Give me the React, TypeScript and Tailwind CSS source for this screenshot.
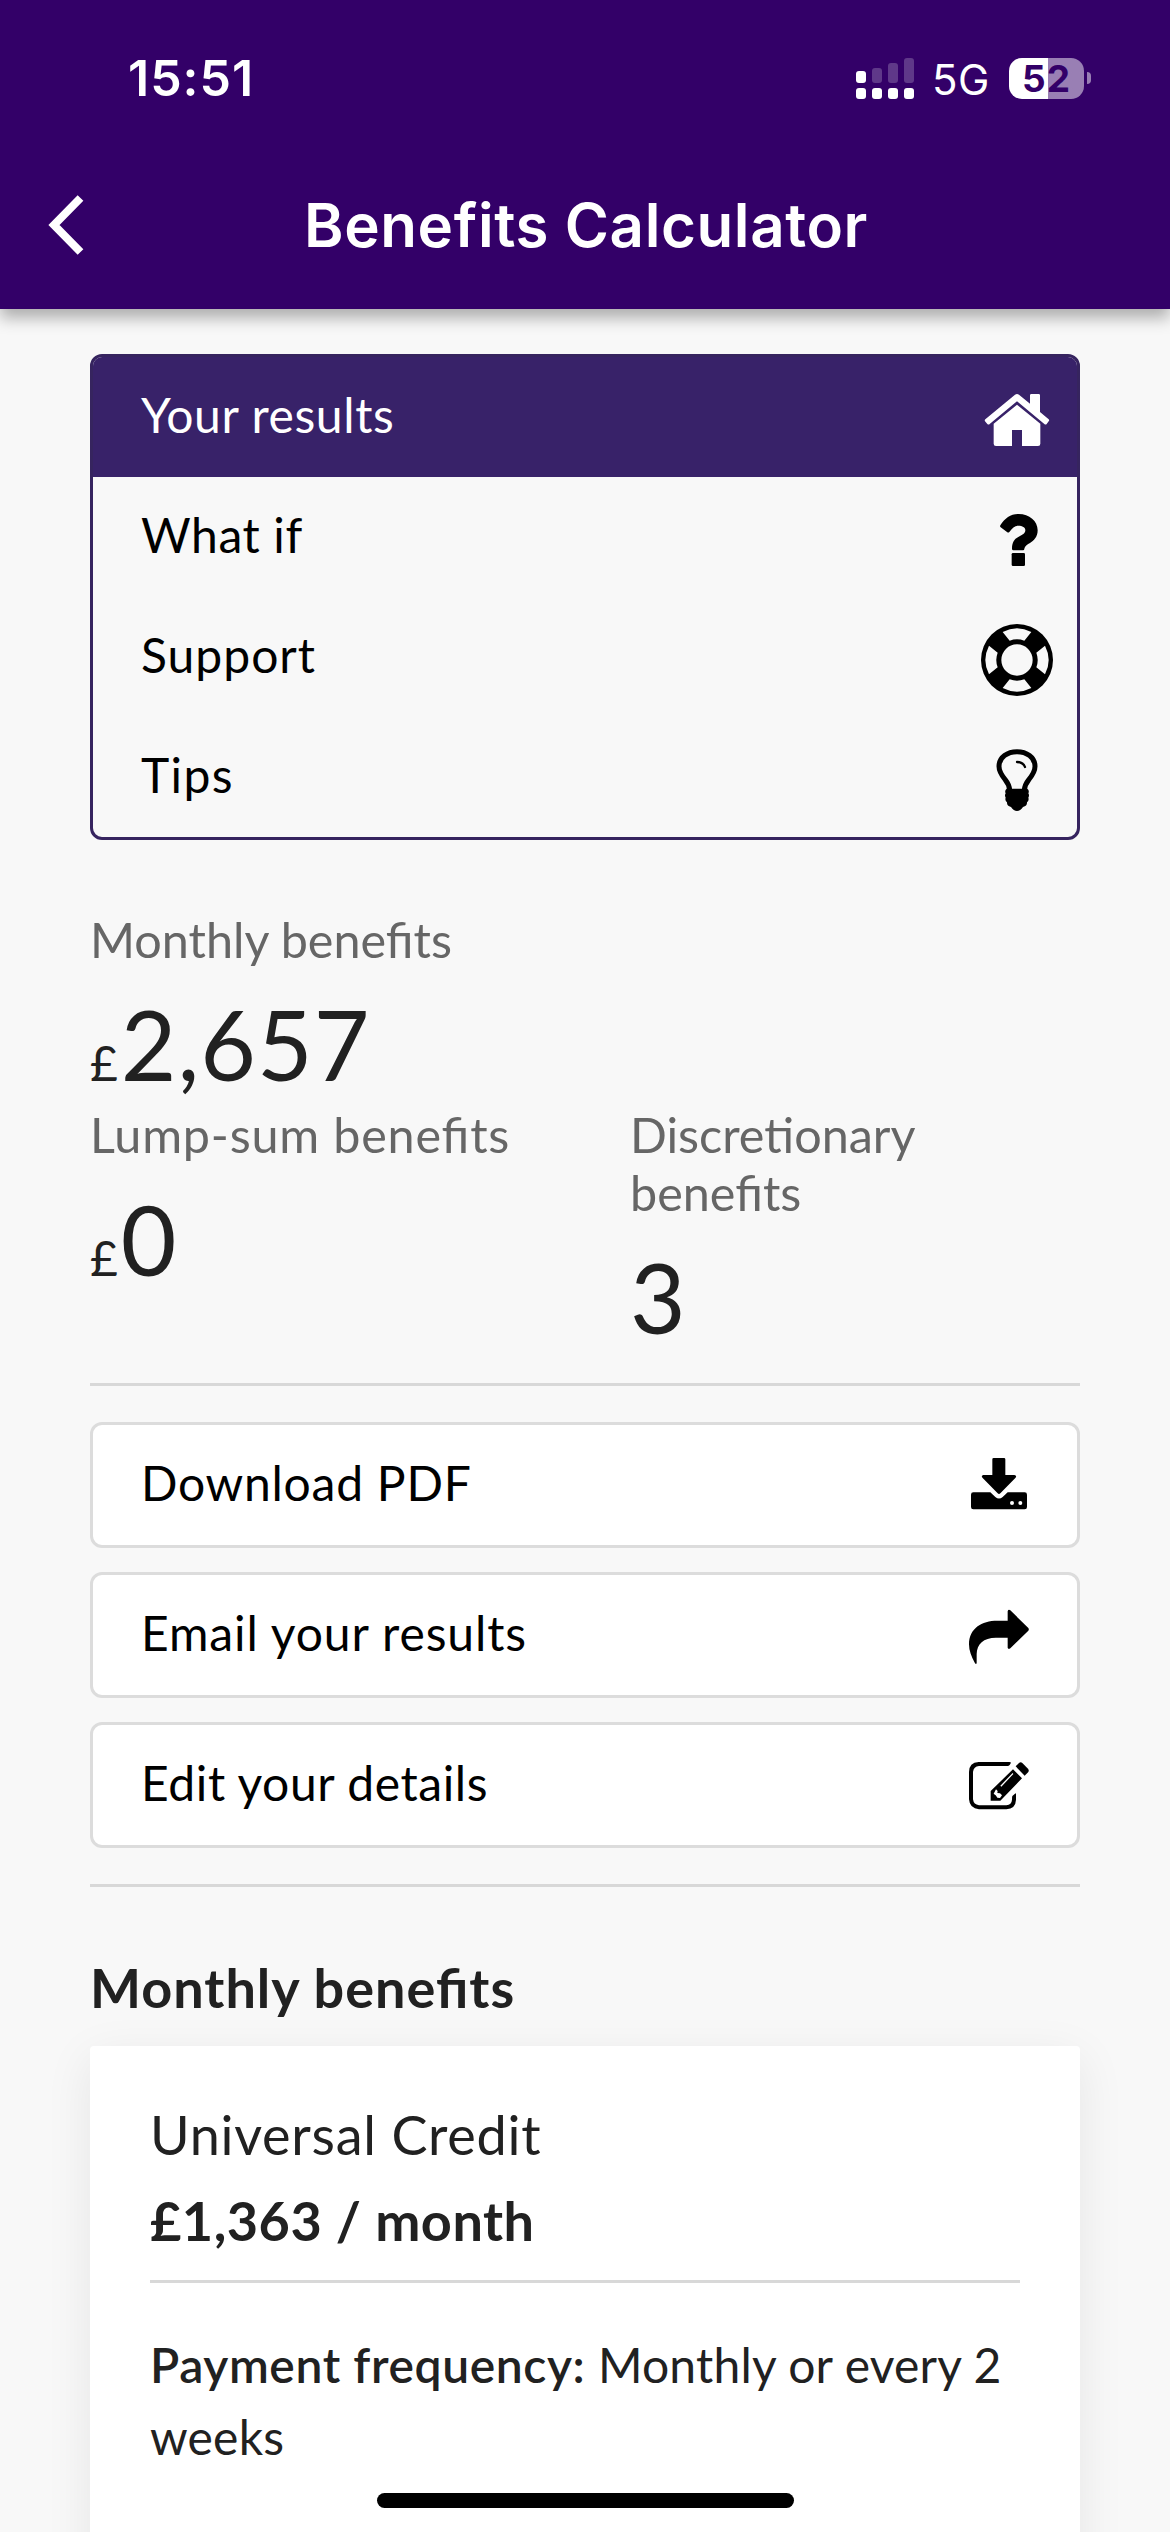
import React from 'react';

interface IconProps {
  className?: string;
}

const HomeIcon = ({ className }: IconProps) => (
  <svg viewBox="123 132 216 216" className={className} fill="currentColor">
    <path d="M225 164Q231 160 237 164L270 191V166Q270 162 274 162H296Q300 162 300 166V216L326 238Q329 241 326 244L320 252Q317 255 313 252L231 184L149 252Q146 255 142 252L135 244Q133 241 136 238Z" />
    <path d="M231 194L301 251V311Q301 318 294 318H246V270H216V318H168Q161 318 161 311V251Z" />
  </svg>
);

const QuestionIcon = ({ className }: IconProps) => (
  <svg viewBox="123 492 216 216" className={className} fill="currentColor">
    <path d="M181 556C195 534 212 522 236 522C268 522 293 543 293 571C293 592 281 602 270 609C258 616 254 620 253 627Q253 631 249 631H220Q216 631 216 626C216 604 226 595 240 588C252 582 256 578 256 570C256 562 247 557 235 557C224 557 217 564 208 576Q205 579 202 577L182 562Q179 559 181 556Z" />
    <rect x="215" y="639" width="40" height="39" rx="4" />
  </svg>
);

const LifeRingIcon = ({ className }: IconProps) => (
  <svg viewBox="-108 -108 216 216" className={className} fill="currentColor">
    <path
      fillRule="evenodd"
      d="M0-108A108 108 0 0 1 0 108A108 108 0 0 1 0-108ZM0-47A47 47 0 0 0 0 47A47 47 0 0 0 0-47ZM-43-84A94 94 0 0 1 43-84L22-58A62 62 0 0 0-22-58ZM84-43A94 94 0 0 1 84 43L58 22A62 62 0 0 0 58-22ZM43 84A94 94 0 0 1-43 84L-22 58A62 62 0 0 0 22 58ZM-84 43A94 94 0 0 1-84-43L-58-22A62 62 0 0 0-58 22Z"
    />
  </svg>
);

const BulbIcon = ({ className }: IconProps) => (
  <svg viewBox="123 1212 216 216" className={className} fill="none" stroke="currentColor">
    <path strokeWidth="15" d="M209 1350C208 1336 203 1328 195 1318C184 1305 177 1295 177 1279C177 1251 203 1235 231 1235C259 1235 285 1251 285 1279C285 1295 278 1305 267 1318C259 1328 254 1336 253 1350" />
    <path strokeWidth="7" strokeLinecap="round" d="M231 1266Q251 1267 255 1281" />
    <path fill="currentColor" stroke="none" d="M200 1346H262Q269 1352 265 1360Q269 1366 265 1373Q268 1382 261 1387Q262 1398 249 1401Q241 1413 231 1413Q221 1413 213 1401Q200 1398 201 1387Q194 1382 197 1373Q193 1366 197 1360Q193 1352 200 1346Z" />
  </svg>
);

const DownloadIcon = ({ className }: IconProps) => (
  <svg viewBox="207 165 180 180" className={className} fill="currentColor">
    <path d="M281 174H312Q316 174 316 178V225H343Q352 227 346 234L301 280Q297 284 293 280L248 234Q242 227 250 225H277V178Q277 174 281 174Z" />
    <path
      fillRule="evenodd"
      d="M219 277H271L286 291Q297 300 308 291L323 277H374Q381 277 381 284V321Q381 328 374 328H220Q213 328 213 321V284Q213 277 220 277ZM336 303A6 6 0 0 0 336 315A6 6 0 0 0 336 303ZM361 303A6 6 0 0 0 361 315A6 6 0 0 0 361 303Z"
    />
  </svg>
);

const ShareIcon = ({ className }: IconProps) => (
  <svg viewBox="207 615 180 180" className={className} fill="currentColor">
    <path d="M323 634Q325 627 331 631L385 684Q388 688 385 692L331 745Q325 749 323 743V713H288C250 713 231 732 230 762V789Q229 794 225 790C214 770 207 752 207 733C207 685 245 662 292 662H323Z" />
  </svg>
);

const EditIcon = ({ className }: IconProps) => (
  <svg viewBox="207 1065 180 180" className={className} fill="currentColor">
    <path d="M333 1088Q332 1086 328 1086H236Q207 1088 207 1116V1198Q209 1226 237 1228H319Q347 1226 348 1199V1182Q348 1178 345 1181L337 1188Q336 1190 336 1199Q335 1214 319 1216H237Q221 1214 219 1198V1116Q221 1100 237 1098H323Q326 1098 329 1095Z" />
    <path
      fillRule="evenodd"
      d="M339 1108L366 1135L301 1202H272V1173ZM301 1157L338 1119L340 1122L304 1160ZM288 1168L293 1173L292 1179L300 1180L306 1186L300 1194L292 1193Q289 1185 281 1181Z"
    />
    <path d="M347 1099L357 1089Q362 1085 367 1089L384 1106Q388 1111 385 1116L374 1127Z" />
  </svg>
);

const MENU_ITEMS = [
  { label: 'Your results', Icon: HomeIcon, active: true, tracking: 'tracking-[0.6px]' },
  { label: 'What if', Icon: QuestionIcon, active: false, tracking: 'tracking-[0.6px]' },
  { label: 'Support', Icon: LifeRingIcon, active: false, tracking: 'tracking-[1px]' },
  { label: 'Tips', Icon: BulbIcon, active: false, tracking: 'tracking-[1.4px]' },
];

const ACTIONS = [
  { label: 'Download PDF', Icon: DownloadIcon, tracking: 'tracking-[0.75px]' },
  { label: 'Email your results', Icon: ShareIcon, tracking: 'tracking-[0.9px]' },
  { label: 'Edit your details', Icon: EditIcon, tracking: 'tracking-[0.6px]' },
];

function StatusBar() {
  return (
    <div className="flex h-[156px] items-center pl-[128px] pr-[79px]">
      <span className="text-[50px] font-semibold leading-none tracking-[1px]">15:51</span>
      <svg viewBox="0 0 58 41" className="ml-auto h-[41px] w-[58px]" fill="#fff">
        <rect x="0" y="13" width="10" height="12" rx="3" />
        <rect x="16" y="10" width="10" height="15" rx="3" opacity=".22" />
        <rect x="32" y="5" width="10" height="20" rx="3" opacity=".22" />
        <rect x="48" y="0" width="10" height="25" rx="3" opacity=".22" />
        <rect x="0" y="30" width="10" height="11" rx="3" />
        <rect x="16" y="30" width="10" height="11" rx="3" />
        <rect x="32" y="30" width="10" height="11" rx="3" />
        <rect x="48" y="30" width="10" height="11" rx="3" />
      </svg>
      <span className="ml-[18px] w-[57px] pt-[3px] text-[42px] leading-none tracking-[0.5px]">5G</span>
      <div className="ml-5 flex h-[41px] w-[75px] items-center justify-center rounded-[13px] bg-linear-to-r from-white from-52% to-[#997fb4] to-52% text-[37px] font-bold leading-none tracking-[1px] text-[#330068]">
        52
      </div>
      <div className="ml-[3px] h-3 w-1 rounded-r-full bg-[#997fb4]" />
    </div>
  );
}

function Header() {
  return (
    <header className="relative h-[309px] shrink-0 bg-[#330068] font-['Inter',sans-serif] text-white shadow-[0_9px_15px_rgba(0,0,0,0.3)]">
      <StatusBar />
      <div className="grid h-[137px] grid-cols-[1fr_auto_1fr] items-center pl-12 pr-[46px]">
        <svg viewBox="0 0 36 60" className="h-[60px] w-9" fill="none" stroke="currentColor" strokeWidth="8">
          <path d="M32.5 3L6 30L32.5 57" />
        </svg>
        <h1 className="text-[60px] font-semibold leading-none tracking-[0.6px]">Benefits Calculator</h1>
      </div>
    </header>
  );
}

function Stat({ label, value, currency }: { label: string; value: string; currency?: boolean }) {
  return (
    <div>
      <p className="text-[48.5px] leading-[58px] text-[#666]">{label}</p>
      <p className="mt-[15px] text-[96px] leading-[122px] tracking-[1px]">
        {currency && <span className="mr-[2px] text-[48px] leading-none">£</span>}
        {value}
      </p>
    </div>
  );
}

export default function App() {
  return (
    <div className="relative flex h-[2532px] w-[1170px] flex-col overflow-hidden bg-[#f8f8f8] font-['Lato',sans-serif] text-[#212121]">
      <Header />

      <main className="mt-[45px] px-[90px]">
        {/* Section menu */}
        <nav className="overflow-hidden rounded-[12px] border-[3px] border-[#36245f]">
          {MENU_ITEMS.map(({ label, Icon, active, tracking }) => (
            <a
              key={label}
              className={`flex h-[120px] items-center justify-between pl-12 pr-6 text-[48px] ${
                active ? 'bg-[#382269] text-white' : 'text-black'
              }`}
            >
              <span className={`pb-[5px] leading-none ${tracking}`}>{label}</span>
              <Icon className="mt-1.5 size-[72px]" />
            </a>
          ))}
        </nav>

        {/* Totals */}
        <section className="mt-[70px]">
          <Stat label="Monthly benefits" value="2,657" currency />
          <div className="grid grid-cols-[540px_360px] [font-feature-settings:'liga'_1]">
            <div className="tracking-[0.8px]">
              <Stat label="Lump-sum benefits" value="0" currency />
            </div>
            <Stat label="Discretionary benefits" value="3" />
          </div>
        </section>

        {/* Actions */}
        <section className="mt-[25px] flex flex-col gap-6 border-y-[3px] border-[#d8d8d8] py-9">
          {ACTIONS.map(({ label, Icon, tracking }) => (
            <button
              key={label}
              type="button"
              className="flex h-[126px] items-center justify-between rounded-[12px] border-[3px] border-[#dcdcdc] bg-white pl-12 pr-12 text-[48px] text-black"
            >
              <span className={`pb-[5px] leading-none ${tracking}`}>{label}</span>
              <Icon className="size-[60px]" />
            </button>
          ))}
        </section>

        {/* Monthly breakdown */}
        <h2 className="mt-[68px] text-[54px] font-bold leading-[66px] tracking-[1px] [font-feature-settings:'liga'_1]">
          Monthly benefits
        </h2>
        <article className="mt-[25px] h-[600px] rounded-[4px] bg-white px-[60px] pt-[56px] shadow-[0_12px_48px_rgba(0,0,0,0.08)]">
          <h3 className="text-[54px] leading-[66px] tracking-[0.75px]">Universal Credit</h3>
          <p className="mt-5 text-[54px] font-bold leading-[66px] tracking-[0.5px]">£1,363 / month</p>
          <hr className="mt-[26px] border-t-[3px] border-[#d8d8d8]" />
          <p className="mt-[46px] text-[48px] leading-[72px] tracking-[0.2px]">
            <span className="font-semibold tracking-[0.6px]">Payment frequency:</span> Monthly or every 2 weeks
          </p>
        </article>
      </main>

      {/* Home indicator */}
      <div className="absolute bottom-6 left-[377px] h-[15px] w-[417px] rounded-full bg-black" />
    </div>
  );
}
